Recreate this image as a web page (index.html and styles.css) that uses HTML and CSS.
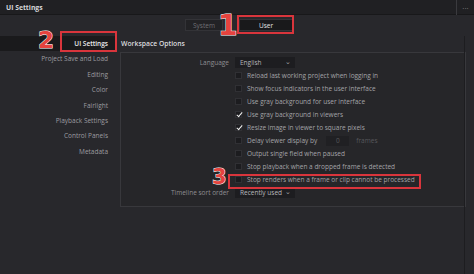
FILE: index.html
```html
<!DOCTYPE html>
<html lang="en">
<head>
    <meta charset="UTF-8">
    <meta name="viewport" content="width=device-width, initial-scale=1.0">
    <title>UI Settings</title>
    <link rel="stylesheet" href="styles.css">
</head>
<body>
    <div class="window">
        <header class="titlebar">
            <span class="title">UI Settings</span>
            <span class="more">···</span>
        </header>

        <nav class="tabs">
            <span class="tab">System</span>
            <span class="tab active">User</span>
        </nav>

        <div class="main">
            <aside class="sidebar">
                <div class="side-item selected">UI Settings</div>
                <div class="side-item">Project Save and Load</div>
                <div class="side-item">Editing</div>
                <div class="side-item">Color</div>
                <div class="side-item">Fairlight</div>
                <div class="side-item">Playback Settings</div>
                <div class="side-item">Control Panels</div>
                <div class="side-item">Metadata</div>
            </aside>

            <section class="content">
                <h2 class="section-title">Workspace Options</h2>
                <div class="panel">
                    <span class="label">Language</span>
                    <span class="select">English <span class="chev">⌄</span></span>

                    <span></span>
                    <span class="check"><span class="box"></span>Reload last working project when logging in</span>

                    <span></span>
                    <span class="check"><span class="box"></span>Show focus indicators in the user interface</span>

                    <span></span>
                    <span class="check"><span class="box"></span>Use gray background for user interface</span>

                    <span></span>
                    <span class="check"><span class="box on"></span>Use gray background in viewers</span>

                    <span></span>
                    <span class="check"><span class="box on"></span>Resize image in viewer to square pixels</span>

                    <span></span>
                    <span class="check"><span class="box"></span>Delay viewer display by <span class="num">0</span><span class="dim">frames</span></span>

                    <span></span>
                    <span class="check"><span class="box"></span>Output single field when paused</span>

                    <span></span>
                    <span class="check"><span class="box"></span>Stop playback when a dropped frame is detected</span>

                    <span></span>
                    <span class="check"><span class="box"></span>Stop renders when a frame or clip cannot be processed</span>

                    <span class="label">Timeline sort order</span>
                    <span class="select">Recently used <span class="chev">⌄</span></span>
                </div>
            </section>
            <div class="scroll"></div>
        </div>

        <span class="hl hl-user"></span>
        <span class="hl hl-side"></span>
        <span class="hl hl-stop"></span>
        <span class="mark mark-1">1</span>
        <span class="mark mark-2">2</span>
        <span class="mark mark-3">3</span>
    </div>
</body>
</html>
```

FILE: styles.css
```css
* {
    margin: 0;
    padding: 0;
    box-sizing: border-box;
}

body {
    font-family: "Open Sans", "Liberation Sans", sans-serif;
    background: #28282c;
    color: #b0b0b4;
    font-size: 6.5px;
    width: 474px;
    height: 274px;
    overflow: hidden;
}

.window {
    position: relative;
    width: 474px;
    height: 274px;
    background: #28282c;
}

.titlebar {
    height: 15px;
    display: flex;
    align-items: center;
    justify-content: space-between;
    background: #202023;
    border-bottom: 1px solid #18181a;
}

.title {
    padding-left: 6px;
    font-weight: 700;
    color: #d6d6d9;
    font-size: 6.8px;
}

.more {
    height: 15px;
    width: 18px;
    display: flex;
    align-items: center;
    justify-content: center;
    border-left: 1px solid #3a3a3e;
    color: #8a8a8e;
    font-size: 8px;
}

.tabs {
    display: flex;
    justify-content: center;
    padding: 4px 0 0 4px;
    height: 21px;
    gap: 1px;
}

.tab {
    height: 12px;
    width: 38px;
    display: flex;
    align-items: center;
    justify-content: center;
    background: #222225;
    border: 1px solid #333337;
    color: #707074;
}

.tab.active {
    width: 54px;
    margin-left: 15px;
    background: #19191b;
    color: #e2e2e5;
}

.main {
    display: flex;
    height: 238px;
}

.sidebar {
    width: 116px;
    display: flex;
    flex-direction: column;
}

.side-item {
    height: 15.4px;
    line-height: 15.4px;
    text-align: right;
    padding-right: 8px;
    color: #9c9ca0;
}

.side-item.selected {
    background: #1a1a1c;
    color: #ececee;
    font-weight: 600;
}

.content {
    width: 350px;
    padding-left: 4px;
}

.section-title {
    font-size: 6.8px;
    font-weight: 600;
    color: #dadade;
    height: 16px;
    line-height: 16px;
    padding-left: 1px;
}

.panel {
    display: grid;
    grid-template-columns: 108px 1fr;
    grid-auto-rows: 13px;
    column-gap: 6px;
    align-items: center;
    border: 1px solid #38383c;
    background: #262629;
    padding: 3px 0 4px;
    height: 155px;
}

.label {
    text-align: right;
    color: #8e8e92;
    white-space: nowrap;
}

.select {
    width: 60px;
    height: 11px;
    display: flex;
    align-items: center;
    justify-content: space-between;
    padding: 0 4px 0 5px;
    background: #1d1d20;
    color: #b8b8bc;
    white-space: nowrap;
}

.chev {
    font-size: 7px;
    line-height: 7px;
    margin-top: -3px;
    color: #a0a0a4;
}

.check {
    display: flex;
    align-items: center;
    gap: 5px;
    color: #a4a4a8;
    white-space: nowrap;
}

.box {
    width: 7px;
    height: 7px;
    background: #1c1c1f;
    border: 1px solid #303034;
    position: relative;
}

.box.on::after {
    content: '';
    position: absolute;
    left: 1.5px;
    top: -1px;
    width: 2px;
    height: 5px;
    border: solid #f2f2f2;
    border-width: 0 1.5px 1.5px 0;
    transform: rotate(40deg);
}

.num {
    width: 23px;
    height: 10px;
    margin-left: 4px;
    background: #202023;
    color: #58585c;
    text-align: center;
    line-height: 10px;
}

.dim {
    color: #58585c;
    margin-left: 2px;
}

.scroll {
    width: 8px;
    border-left: 1px solid #1d1d20;
    margin-left: -2px;
}

.hl {
    position: absolute;
    border: 2px solid #d9353c;
}

.hl-user {
    left: 237px;
    top: 15px;
    width: 57px;
    height: 19px;
}

.hl-side {
    left: 60px;
    top: 31px;
    width: 57px;
    height: 21px;
}

.hl-stop {
    left: 228px;
    top: 174px;
    width: 193px;
    height: 15px;
}

.mark {
    position: absolute;
    font-family: "DejaVu Sans", sans-serif;
    font-weight: 700;
    color: #e5433f;
    -webkit-text-stroke: 1px #ffffff;
    paint-order: stroke fill;
    line-height: 1;
}

.mark-1 {
    left: 218px;
    top: 12px;
    font-size: 28px;
}

.mark-2 {
    left: 38px;
    top: 29px;
    font-size: 23px;
}

.mark-3 {
    left: 212px;
    top: 170px;
    font-size: 21px;
    line-height: 0.75;
}
```
